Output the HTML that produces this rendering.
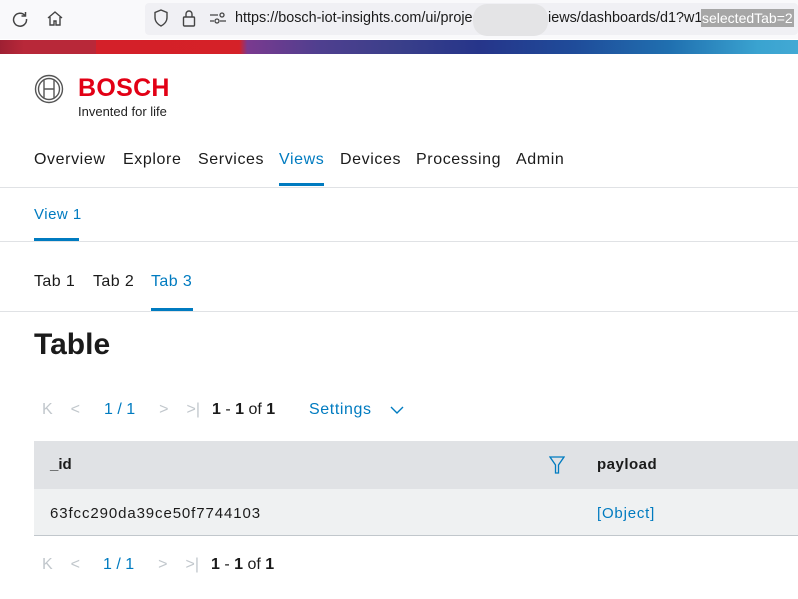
<!DOCTYPE html>
<html><head><meta charset="utf-8"><style>
*{margin:0;padding:0;box-sizing:border-box}
body{width:798px;height:599px;overflow:hidden;background:#fff;font-family:"Liberation Sans",sans-serif;color:#1b1b1b;position:relative}
.a{position:absolute;white-space:nowrap}
.blue{color:#007bc0}
.line{position:absolute;left:0;width:798px;height:1px;background:#e0e2e5}
.ul{position:absolute;height:3px;background:#007bc0}
.nav{font-size:16px;top:151px;letter-spacing:0.6px}
.g{color:#c1c7cc}
.u{top:10px;font-size:14.4px;color:#1b1b1b}
</style></head><body>
<div class="a" style="left:0;top:0;width:798px;height:39px;background:#f9f9fb"></div>
<div class="a" style="left:145px;top:3px;width:653px;height:32px;background:#f0f0f4;border-radius:4px"></div>
<svg class="a" style="left:10px;top:9px" width="20" height="20" viewBox="0 0 20 20" fill="none" stroke="#444" stroke-width="1.5"><path d="M15 6.5A6.5 6.5 0 1 0 16.5 10"/><path d="M15.5 3v4h-4"/></svg>
<svg class="a" style="left:45px;top:9px" width="20" height="20" viewBox="0 0 20 20" fill="none" stroke="#444" stroke-width="1.4"><path d="M3 9L10 3l7 6M5 8v8h4v-4h2v4h4V8"/></svg>
<svg class="a" style="left:152px;top:8px" width="18" height="20" viewBox="0 0 18 20" fill="none" stroke="#444" stroke-width="1.4"><path d="M9 2l6 2.5v5c0 4-3 7-6 8.5-3-1.5-6-4.5-6-8.5v-5z"/></svg>
<svg class="a" style="left:181px;top:8px" width="16" height="20" viewBox="0 0 16 20" fill="none" stroke="#444" stroke-width="1.4"><rect x="2.5" y="9" width="11" height="9" rx="1"/><path d="M5 9V6a3 3 0 0 1 6 0v3"/></svg>
<svg class="a" style="left:209px;top:11px" width="18" height="14" viewBox="0 0 18 14" fill="none" stroke="#444" stroke-width="1.3"><path d="M1 4h8M1 10h4M11 10h6"/><circle cx="13" cy="4" r="2"/><circle cx="8" cy="10" r="2"/></svg>
<div class="a u" style="left:235px">https://bosch-iot-insights.com/ui/proje</div>
<div class="a" style="left:473px;top:4px;width:75px;height:32px;background:#e4e4e6;border-radius:14px"></div>
<div class="a u" style="left:548px">iews/dashboards/d1?w1.</div>
<div class="a u" style="left:701px;top:9px;background:#a6a6a6;color:#fff;padding:1px 1px;font-size:14px">selectedTab=2</div>
<div class="a" style="left:0;top:40px;width:798px;height:14px;background:linear-gradient(90deg,#9e2033 0,#b82839 3%,#b82839 12%,#d42029 12%,#d52128 30%,#7a3a8f 31%,#4f3f8f 40%,#3a3f8a 50%,#26358a 60%,#1f4c9a 72%,#2070b0 84%,#3aa3d0 95%,#42a9d4 100%)"></div>
<svg class="a" style="left:34px;top:74px" width="30" height="30" viewBox="0 0 30 30" fill="none" stroke="#555" stroke-width="1.4"><circle cx="15" cy="15" r="13.5"/><circle cx="15" cy="15" r="10.5"/><path d="M10 6.5v17M20 6.5v17M10 15h10"/></svg>
<div class="a" style="left:78px;top:74px;font-size:25px;font-weight:bold;color:#e20015;letter-spacing:0.3px">BOSCH</div>
<div class="a" style="left:78px;top:104px;font-size:13px;color:#222">Invented for life</div>
<div class="a nav" style="left:34px">Overview</div>
<div class="a nav" style="left:123px">Explore</div>
<div class="a nav" style="left:198px">Services</div>
<div class="a nav blue" style="left:279px">Views</div>
<div class="a nav" style="left:340px">Devices</div>
<div class="a nav" style="left:416px">Processing</div>
<div class="a nav" style="left:516px">Admin</div>
<div class="ul" style="left:279px;top:183px;width:45px"></div>
<div class="line" style="top:187px"></div>
<div class="a blue" style="left:34px;top:206px;font-size:15px;letter-spacing:0.5px">View 1</div>
<div class="ul" style="left:34px;top:238px;width:45px"></div>
<div class="line" style="top:241px"></div>
<div class="a" style="left:34px;top:273px;font-size:16px;letter-spacing:0.4px">Tab 1</div>
<div class="a" style="left:93px;top:273px;font-size:16px;letter-spacing:0.4px">Tab 2</div>
<div class="a blue" style="left:151px;top:273px;font-size:16px;letter-spacing:0.4px">Tab 3</div>
<div class="ul" style="left:151px;top:308px;width:42px"></div>
<div class="line" style="top:311px"></div>
<div class="a" style="left:34px;top:328px;font-size:30px;font-weight:bold">Table</div>
<div class="a" style="left:42px;top:401px;font-size:16px"><span class="g">K</span><span class="g" style="margin-left:18px">&lt;</span><span class="blue" style="margin-left:24px">1 / 1</span><span class="g" style="margin-left:24px">&gt;</span><span class="g" style="margin-left:18px">&gt;|</span></div>
<div class="a" style="left:212px;top:401px;font-size:16px"><b>1</b> - <b>1</b> of <b>1</b></div>
<div class="a blue" style="left:309px;top:401px;font-size:16px;letter-spacing:0.6px">Settings</div>
<svg class="a" style="left:389px;top:404px" width="16" height="12" viewBox="0 0 16 12" fill="none" stroke="#007bc0" stroke-width="1.4"><path d="M2 3l6 6 6-6"/></svg>
<div class="a" style="left:34px;top:441px;width:764px;height:48px;background:#e0e2e5"></div>
<div class="a" style="left:34px;top:489px;width:764px;height:47px;background:#eff1f2;border-bottom:1px solid #c1c7cc"></div>
<div class="a" style="left:50px;top:456px;font-size:15px;font-weight:bold">_id</div>
<svg class="a" style="left:549px;top:455px" width="16" height="20" viewBox="0 0 16 20" fill="none" stroke="#007bc0" stroke-width="1.3"><path d="M1 2h14L9.5 10v8h-3v-8z"/></svg>
<div class="a" style="left:597px;top:456px;font-size:15px;font-weight:bold;letter-spacing:0.5px">payload</div>
<div class="a" style="left:50px;top:505px;font-size:15px;letter-spacing:0.9px">63fcc290da39ce50f7744103</div>
<div class="a blue" style="left:597px;top:505px;font-size:15px;letter-spacing:0.8px">[Object]</div>
<div class="a" style="left:42px;top:556px;font-size:16px"><span class="g">K</span><span class="g" style="margin-left:18px">&lt;</span><span class="blue" style="margin-left:23px">1 / 1</span><span class="g" style="margin-left:24px">&gt;</span><span class="g" style="margin-left:18px">&gt;|</span></div>
<div class="a" style="left:211px;top:556px;font-size:16px"><b>1</b> - <b>1</b> of <b>1</b></div>
</body></html>
